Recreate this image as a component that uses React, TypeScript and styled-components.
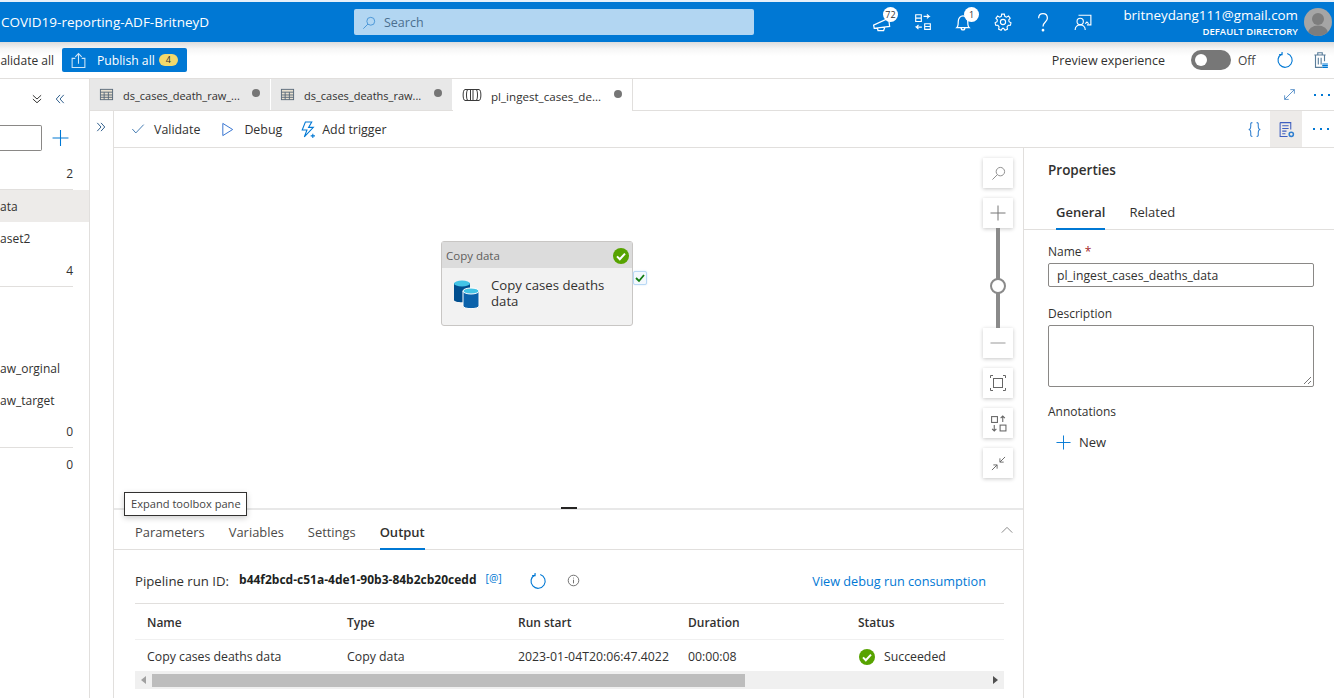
import styled, { createGlobalStyle } from 'styled-components'

const GlobalStyle = createGlobalStyle`
  html, body {
    margin: 0;
    padding: 0;
    background: #fff;
  }
  body {
    font-family: "Open Sans", "Liberation Sans", sans-serif;
    font-size: 12px;
    color: #323130;
  }
  * { box-sizing: border-box; }
`

const Page = styled.div`
  width: 1334px;
  height: 698px;
  overflow: hidden;
  position: relative;
  display: flex;
  flex-direction: column;
`

const TopBar = styled.header`
  height: 42px;
  flex: none;
  border-top: 2px solid #e6f0fa;
  background: #0078d4;
  color: #fff;
  display: flex;
  align-items: center;
`

const BrandTitle = styled.div`
  width: 354px;
  padding-left: 1px;
  font-size: 13.5px;
  white-space: nowrap;
  margin-top: -1px;
`

const SearchBox = styled.div`
  width: 400px;
  height: 26px;
  background: #b2d6f2;
  border-radius: 2px;
  display: flex;
  align-items: center;
  padding: 1px 0 0 8px;
  gap: 8px;
  color: #4b6f8f;
  font-size: 12.5px;
`

const TopIcons = styled.div`
  display: flex;
  align-items: center;
  margin-left: 109px;
  width: 240px;
`

const TopIconSlot = styled.div`
  width: 40px;
  height: 30px;
  display: flex;
  align-items: center;
  justify-content: center;
  position: relative;
`

const CountBadge = styled.span<{ $left: number }>`
  position: absolute;
  top: 0;
  left: ${p => p.$left}px;
  min-width: 15px;
  height: 15px;
  padding: 0 1px;
  border-radius: 8px;
  background: #fff;
  color: #333;
  font-size: 9px;
  line-height: 15px;
  text-align: center;
`

const Account = styled.div`
  flex: 1;
  display: flex;
  flex-direction: column;
  align-items: flex-end;
  margin-top: 2px;
  white-space: nowrap;
`

const AccountMail = styled.div`
  font-size: 13.4px;
  line-height: 17px;
`

const AccountDir = styled.div`
  font-size: 9.5px;
  font-weight: 600;
  line-height: 15px;
`

const Avatar = styled.div`
  width: 28px;
  height: 28px;
  margin: 0 2px 0 6px;
  border-radius: 50%;
  background: #a5a5a5;
  overflow: hidden;
`

const ActionBar = styled.div`
  height: 37px;
  flex: none;
  display: flex;
  align-items: center;
  border-bottom: 1px solid #e1dfdd;
  background: linear-gradient(#dcdcdc 0, #f6f6f6 7px, #fff 14px);
`

const EdgeLabel = styled.div`
  width: 54px;
  margin-right: 8px;
  display: flex;
  justify-content: flex-end;
  white-space: nowrap;
  font-size: 12px;
`

const PublishButton = styled.div`
  width: 125px;
  height: 24px;
  background: #0078d4;
  color: #fff;
  border-radius: 2px;
  display: flex;
  align-items: center;
  padding-left: 8px;
  font-size: 12.2px;
  gap: 10px;
`

const PublishBadge = styled.span`
  width: 19px;
  height: 12px;
  margin-left: -6px;
  border-radius: 6px;
  background: #f2d96c;
  color: #323130;
  font-size: 9px;
  line-height: 12px;
  text-align: center;
`

const ActionRight = styled.div`
  margin-left: auto;
  display: flex;
  align-items: center;
  padding-right: 5px;
`

const PreviewLabel = styled.span`
  margin-right: 26px;
  font-size: 12.5px;
`

const Toggle = styled.div`
  width: 40px;
  height: 20px;
  border-radius: 10px;
  background: #777;
  padding: 4px;
  margin-right: 7px;
`

const ToggleKnob = styled.div`
  width: 12px;
  height: 12px;
  border-radius: 50%;
  background: #fff;
`

const OffLabel = styled.span`
  width: 19px;
  margin-right: 19px;
  font-size: 12px;
  color: #444;
`

const ActionGap = styled.span`
  width: 17px;
`

const Main = styled.div`
  flex: 1;
  min-height: 0;
  display: flex;
`

const LeftPanel = styled.aside`
  width: 90px;
  flex: none;
  border-right: 1px solid #e1dfdd;
  display: flex;
  flex-direction: column;
  font-size: 12px;
`

const LeftHeader = styled.div`
  height: 44px;
  display: flex;
  justify-content: flex-end;
  align-items: flex-start;
  gap: 11px;
  padding: 14px 23px 0 0;
`

const FilterRow = styled.div`
  height: 28px;
  display: flex;
  align-items: center;
  margin-bottom: 6px;
`

const FilterInput = styled.div`
  width: 42px;
  height: 26px;
  margin-top: 2px;
  border: 1px solid #8a8886;
  border-left: 0;
  border-radius: 0 2px 2px 0;
  margin-right: 10px;
`

const CountRow = styled.div<{ $line?: boolean; $h: number }>`
  height: ${p => p.$h}px;
  width: 73px;
  display: flex;
  align-items: center;
  justify-content: flex-end;
  border-bottom: ${p => (p.$line ? '1px solid #e1dfdd' : '0')};
`

const TreeRow = styled.div<{ $selected?: boolean; $gap?: number }>`
  height: 32px;
  line-height: 34px;
  margin-top: ${p => p.$gap || 0}px;
  background: ${p => (p.$selected ? '#edebe9' : 'transparent')};
  white-space: nowrap;
`

const Workspace = styled.div`
  flex: 1;
  min-width: 0;
  display: flex;
  flex-direction: column;
`

const TabStrip = styled.div`
  height: 32px;
  flex: none;
  display: flex;
  border-bottom: 1px solid #e1dfdd;
  padding-right: 4px;
`

const DocTab = styled.div<{ $active?: boolean; $w: number }>`
  width: ${p => p.$w}px;
  height: ${p => (p.$active ? 32 : 31)}px;
  background: ${p => (p.$active ? '#fff' : '#e8e8e8')};
  border-right: ${p => (p.$active ? '1px solid #e1dfdd' : '1px solid #fff')};
  display: flex;
  align-items: center;
  padding: 0 10px 0 9px;
  font-size: ${p => (p.$active ? 11.6 : 11)}px;
  white-space: nowrap;
`

const TabName = styled.span`
  flex: 1;
  margin: 2px 0 0 9px;
`

const DirtyDot = styled.span`
  width: 8px;
  height: 8px;
  border-radius: 50%;
  background: #767676;
  margin-top: -3px;
`

const TabTools = styled.div`
  margin-left: auto;
  display: flex;
  align-items: center;
  gap: 18px;
`

const Dots = styled.span`
  display: flex;
  gap: 5px;
`

const Dot = styled.i`
  width: 2px;
  height: 2px;
  background: #0078d4;
`

const WorkBody = styled.div`
  flex: 1;
  min-height: 0;
  display: flex;
`

const ToolboxStrip = styled.div`
  width: 24px;
  flex: none;
  border-right: 1px solid #e1dfdd;
  padding: 9px 0 0 5px;
`

const Editor = styled.div`
  flex: 1;
  min-width: 0;
  display: flex;
  flex-direction: column;
`

const CommandBar = styled.div`
  height: 37px;
  flex: none;
  display: flex;
  align-items: center;
  border-bottom: 1px solid #e1dfdd;
  padding-left: 17px;
`

const Command = styled.div<{ $gap: number; $mr: number }>`
  display: flex;
  align-items: center;
  gap: ${p => p.$gap}px;
  margin-right: ${p => p.$mr}px;
  font-size: 12.4px;
`

const CommandRight = styled.div`
  margin-left: auto;
  display: flex;
  align-items: center;
  height: 100%;
`

const CommandIcon = styled.div<{ $active?: boolean; $shift?: number }>`
  width: 32px;
  height: 36px;
  display: flex;
  align-items: center;
  justify-content: center;
  padding-left: ${p => p.$shift || 0}px;
  background: ${p => (p.$active ? '#edebe9' : 'transparent')};
`

const Split = styled.div`
  flex: 1;
  min-height: 0;
  display: flex;
`

const CenterColumn = styled.div`
  flex: 1;
  min-width: 0;
  display: flex;
  flex-direction: column;
  border-right: 1px solid #e1dfdd;
`

const Canvas = styled.div`
  height: 360px;
  flex: none;
  position: relative;
`

const Activity = styled.div`
  position: absolute;
  left: 327px;
  top: 93px;
  width: 192px;
  height: 85px;
  background: #f2f2f2;
  border: 1px solid #c8c6c4;
  border-radius: 3px;
`

const ActivityHead = styled.div`
  height: 26px;
  background: #dcdcdc;
  display: flex;
  align-items: center;
  justify-content: space-between;
  padding: 1px 3px 0 4px;
  font-size: 11.5px;
  color: #605e5c;
`

const ActivityBody = styled.div`
  display: flex;
  padding: 9px 0 0 12px;
  gap: 11px;
  font-size: 13.2px;
  line-height: 16px;
`

const ActivityName = styled.div`
  width: 130px;
`

const ActivityPort = styled.div`
  position: absolute;
  left: 191px;
  top: 29px;
  width: 14px;
  height: 14px;
  background: #f3f8fd;
  border: 1px solid #b8d8f5;
  border-radius: 2px;
  box-shadow: 0 0 2px #cfe4f7;
  display: flex;
  align-items: center;
  justify-content: center;
`

const ZoomRail = styled.div`
  position: absolute;
  top: 10px;
  right: 10px;
  width: 30px;
  display: flex;
  flex-direction: column;
  align-items: center;
`

const ZoomButton = styled.div<{ $mb?: number }>`
  width: 30px;
  height: 30px;
  margin-bottom: ${p => p.$mb ?? 10}px;
  background: #fff;
  box-shadow: 0 1px 4px rgba(0, 0, 0, 0.22);
  display: flex;
  align-items: center;
  justify-content: center;
`

const ZoomTrack = styled.div`
  width: 4px;
  height: 100px;
  background: #8a8a8a;
  position: relative;
`

const ZoomKnob = styled.div`
  position: absolute;
  left: -6px;
  top: 50px;
  width: 16px;
  height: 16px;
  border-radius: 50%;
  background: #fff;
  border: 2px solid #8a8a8a;
`

const Splitter = styled.div`
  height: 2px;
  flex: none;
  background: #e8e8e8;
  position: relative;
`

const SplitterGrip = styled.div`
  position: absolute;
  left: 447px;
  top: -1px;
  width: 16px;
  height: 2px;
  background: #252423;
`

const Tooltip = styled.div`
  position: absolute;
  left: 124px;
  top: 492px;
  height: 24px;
  padding: 0 5px 0 6px;
  background: #fff;
  border: 1px solid #323130;
  box-shadow: 0 2px 6px rgba(0, 0, 0, 0.2);
  font-size: 11.1px;
  line-height: 22px;
  color: #444;
  white-space: nowrap;
`

const BottomPanel = styled.div`
  flex: 1;
  min-height: 0;
  padding-bottom: 9px;
`

const BottomTabs = styled.div`
  height: 40px;
  display: flex;
  align-items: stretch;
  gap: 24px;
  padding: 0 10px 0 21px;
  border-bottom: 1px solid #e1dfdd;
`

const PanelTab = styled.div<{ $active?: boolean }>`
  display: flex;
  align-items: center;
  padding-top: 6px;
  font-size: ${p => (p.$active ? 13 : 12.9)}px;
  margin-bottom: -1px;
  color: ${p => (p.$active ? '#323130' : '#4c4a48')};
  font-weight: ${p => (p.$active ? 600 : 400)};
  border-bottom: 2px solid ${p => (p.$active ? '#0078d4' : 'transparent')};
`

const Collapse = styled.div`
  margin: 4px 0 0 auto;
  align-self: center;
`

const RunRow = styled.div`
  height: 54px;
  margin: 0 19px 0 21px;
  display: flex;
  align-items: center;
  border-bottom: 1px solid #e1dfdd;
  padding-top: 8px;
  font-size: 13.2px;
`

const RunId = styled.span`
  margin: -2px 0 0 10px;
  font-size: 12px;
  font-weight: 700;
  color: #201f1e;
`

const RunTools = styled.div`
  display: flex;
  align-items: center;
  margin-left: 9px;
  gap: 20px;
`

const AtMark = styled.span`
  font-size: 10.5px;
  color: #0078d4;
  margin-top: -5px;
  margin-right: 7px;
`

const ConsumptionLink = styled.span`
  margin-left: auto;
  margin-right: 18px;
  color: #0078d4;
  font-size: 12.7px;
`

const TableRow = styled.div<{ $head?: boolean; $h: number }>`
  margin: 0 19px 0 21px;
  height: ${p => p.$h}px;
  padding: 2px 0 0 12px;
  display: grid;
  grid-template-columns: 200px 171px 170px 170px 1fr;
  align-items: center;
  font-size: ${p => (p.$head ? 12 : 12.3)}px;
  font-weight: ${p => (p.$head ? 600 : 400)};
  border-bottom: ${p => (p.$head ? '1px solid #f0f0f0' : '0')};
`

const StatusCell = styled.div`
  display: flex;
  align-items: center;
  gap: 9px;
  padding-left: 1px;
`

const ScrollBar = styled.div`
  margin: 0 19px 0 21px;
  height: 18px;
  background: #f0f0f0;
  display: flex;
  align-items: center;
  justify-content: space-between;
  padding: 0 6px;
  position: relative;
`

const ScrollThumb = styled.div`
  position: absolute;
  left: 17px;
  top: 3px;
  width: 593px;
  height: 13px;
  background: #bdbdbd;
`

const ScrollArrow = styled.span<{ $right?: boolean }>`
  width: 0;
  height: 0;
  border-top: 4px solid transparent;
  border-bottom: 4px solid transparent;
  border-left: ${p => (p.$right ? '5px solid #505050' : '0')};
  border-right: ${p => (p.$right ? '0' : '5px solid #a0a0a0')};
`

const Properties = styled.aside`
  width: 310px;
  flex: none;
  font-size: 12px;
`

const PropTitle = styled.div`
  padding: 13px 0 0 24px;
  height: 46px;
  font-size: 13.5px;
  font-weight: 600;
`

const PropTabs = styled.div`
  height: 36px;
  display: flex;
  gap: 24px;
  padding-left: 32px;
  border-bottom: 1px solid #e1dfdd;
`

const PropTab = styled.div<{ $active?: boolean }>`
  display: flex;
  align-items: center;
  padding-top: 2px;
  font-size: 13px;
  margin-bottom: -1px;
  font-weight: ${p => (p.$active ? 600 : 400)};
  border-bottom: 2px solid ${p => (p.$active ? '#0078d4' : 'transparent')};
`

const Form = styled.div`
  padding: 13px 20px 0 24px;
`

const FieldLabel = styled.div<{ $mt?: number }>`
  margin-top: ${p => p.$mt || 0}px;
  margin-bottom: 2px;
  height: 18px;
  line-height: 18px;
  font-size: 12px;
  font-weight: 500;
`

const Required = styled.span`
  color: #a4262c;
  font-weight: 400;
`

const NameInput = styled.div`
  height: 24px;
  border: 1px solid #8a8886;
  border-radius: 2px;
  line-height: 23px;
  padding-left: 8px;
  font-size: 12.2px;
`

const DescriptionBox = styled.div`
  height: 62px;
  border: 1px solid #8a8886;
  border-radius: 2px;
  position: relative;
`

const Resizer = styled.svg`
  position: absolute;
  right: 1px;
  bottom: 1px;
`

const AddNew = styled.div`
  display: flex;
  align-items: center;
  gap: 8px;
  margin: 12px 0 0 8px;
  font-size: 13px;
`

const Stroke = { fill: 'none', stroke: 'currentColor', strokeWidth: 1 }

function Glyph({ size = 16, color = '#0078d4', children }: { size?: number; color?: string; children: React.ReactNode }) {
  return (
    <svg width={size} height={size} viewBox="0 0 16 16" style={{ color, flex: 'none' }} {...Stroke}>
      {children}
    </svg>
  )
}

function GreenCheck({ size = 16 }: { size?: number }) {
  return (
    <svg width={size} height={size} viewBox="0 0 16 16" style={{ flex: 'none' }}>
      <circle cx="8" cy="8" r="8" fill="#57a300" />
      <path d="M4 8.4l2.8 2.8L12 5.6" fill="none" stroke="#fff" strokeWidth="2" />
    </svg>
  )
}

function TableIcon() {
  return (
    <Glyph size={15} color="#5a6a7a">
      <rect x="1.5" y="2.5" width="13" height="11" fill="#e8e0d0" />
      <path d="M1.5 5.5h13M1.5 8.5h13M1.5 11h13M5.5 5.5v8M10 5.5v8" />
    </Glyph>
  )
}

function Refresh({ size = 18 }: { size?: number }) {
  return (
    <Glyph size={size}>
      <path d="M5.2 2.6A6.3 6.3 0 1 0 10 2.2" />
      <path d="M5.4 0.8v2.4H2.8" />
    </Glyph>
  )
}

function DoubleChevron({ dir, color = '#323130' }: { dir: 'left' | 'right' | 'down'; color?: string }) {
  const rot = dir === 'left' ? 180 : dir === 'down' ? 90 : 0
  return (
    <Glyph size={12} color={color}>
      <g transform={`rotate(${rot} 8 8)`}>
        <path d="M3 2.5L8 8l-5 5.5M8 2.5L13 8l-5 5.5" strokeWidth="1.3" />
      </g>
    </Glyph>
  )
}

function Ellipsis() {
  return (
    <Dots>
      <Dot />
      <Dot />
      <Dot />
    </Dots>
  )
}

export default function App() {
  return (
    <Page>
      <GlobalStyle />
      <TopBar>
        <BrandTitle>COVID19-reporting-ADF-BritneyD</BrandTitle>
        <SearchBox>
          <Glyph size={14} color="#3f8fd4">
            <circle cx="10" cy="6" r="4.5" />
            <path d="M6.8 9.2L1.5 14.5" />
          </Glyph>
          Search
        </SearchBox>
        <TopIcons>
          <TopIconSlot>
            <Glyph size={20} color="#fff">
              <path d="M.5 10.5l12-5.500.8 6.500L1 13zM3.500 12.800l.5 2h4.500l1-2.800" />
            </Glyph>
            <CountBadge $left={20}>72</CountBadge>
          </TopIconSlot>
          <TopIconSlot>
            <Glyph size={18} color="#fff">
              <path d="M1.500 1.500h5v6h-5zM1.500 4.500h5M9.500 9.500h5v5h-5zM9.500 12h5M8.500 3h5l-2-1.800M13.500 3l-2 1.800M7 12.500H2l2 1.800M2 12.500l2-1.800" />
            </Glyph>
          </TopIconSlot>
          <TopIconSlot>
            <Glyph size={20} color="#fff">
              <path d="M3 12.500c1.200-1.200 1.200-2.500 1.200-5C4.200 4.800 6 3 8 3s3.800 1.800 3.800 4.500c0 2.500 0 3.800 1.200 5zM6.500 12.500c0 2.400 3 2.400 3 0" />
            </Glyph>
            <CountBadge $left={21}>1</CountBadge>
          </TopIconSlot>
          <TopIconSlot>
            <Glyph size={18} color="#fff">
              <circle cx="8" cy="8" r="2.300" />
              <path d="M6.800 1h2.400l.4 2 1.500.700 1.800-1 1.500 1.900-1.300 1.500.3 1.600 1.700.900-.5 2.300-2 .1-1 1.300.4 2-2.200 1-1.200-1.600H7.500l-1.200 1.600-2.200-1 .4-2-1-1.300-2-.1-.5-2.300 1.700-.9.300-1.600L1.700 4.600l1.500-1.900 1.800 1 1.500-.7z" />
            </Glyph>
          </TopIconSlot>
          <TopIconSlot>
            <Glyph size={20} color="#fff">
              <path d="M4.500 5c0-5 7-5 7 0 0 3-3.500 3-3.500 6.500" />
              <circle cx="8" cy="14.500" r=".6" fill="#fff" />
            </Glyph>
          </TopIconSlot>
          <TopIconSlot>
            <Glyph size={18} color="#fff">
              <circle cx="5.500" cy="7.500" r="2.800" />
              <path d="M1 15c0-6 9-6 9 0M4 2h11v8.500h-3.500M10 9.500l1.500-1.500 1.500 1.500" />
            </Glyph>
          </TopIconSlot>
        </TopIcons>
        <Account>
          <AccountMail>britneydang111@gmail.com</AccountMail>
          <AccountDir>DEFAULT DIRECTORY</AccountDir>
        </Account>
        <Avatar>
          <svg width="28" height="28" viewBox="0 0 28 28">
            <circle cx="14" cy="11" r="6" fill="#7d7d7d" />
            <ellipse cx="14" cy="25" rx="10" ry="7.500" fill="#7d7d7d" />
          </svg>
        </Avatar>
      </TopBar>

      <ActionBar>
        <EdgeLabel>alidate all</EdgeLabel>
        <PublishButton>
          <Glyph size={17} color="#cfe6f8">
            <path d="M5 6H2v8.500h12V6h-3M8 11V1.500M5 4.500l3-3 3 3" />
          </Glyph>
          Publish all
          <PublishBadge>4</PublishBadge>
        </PublishButton>
        <ActionRight>
          <PreviewLabel>Preview experience</PreviewLabel>
          <Toggle>
            <ToggleKnob />
          </Toggle>
          <OffLabel>Off</OffLabel>
          <Refresh />
          <ActionGap />
          <Glyph size={18} color="#5a7d9a">
            <path d="M3 3.500h10M6 3.500V1.500h4v2M4 3.500v11h6M12 3.500V9M6.500 6v6M9 6v6" />
            <path d="M10 11.500h5M10 13h5M10 14.500h5" stroke="#0078d4" />
          </Glyph>
        </ActionRight>
      </ActionBar>

      <Main>
        <LeftPanel>
          <LeftHeader>
            <DoubleChevron dir="down" />
            <DoubleChevron dir="left" color="#2b5c8a" />
          </LeftHeader>
          <FilterRow>
            <FilterInput />
            <Glyph size={17}>
              <path d="M8 1v15M.5 8.500h15" />
            </Glyph>
          </FilterRow>
          <CountRow $h={33} $line>
            2
          </CountRow>
          <TreeRow $selected>ata</TreeRow>
          <TreeRow>aset2</TreeRow>
          <CountRow $h={33} $line>
            4
          </CountRow>
          <TreeRow $gap={65}>aw_orginal</TreeRow>
          <TreeRow>aw_target</TreeRow>
          <CountRow $h={32} $line>
            0
          </CountRow>
          <CountRow $h={33}>0</CountRow>
        </LeftPanel>

        <Workspace>
          <TabStrip>
            <DocTab $w={181}>
              <TableIcon />
              <TabName>ds_cases_death_raw_...</TabName>
              <DirtyDot />
            </DocTab>
            <DocTab $w={182}>
              <TableIcon />
              <TabName>ds_cases_deaths_raw...</TabName>
              <DirtyDot />
            </DocTab>
            <DocTab $active $w={180}>
              <svg width="20" height="14" viewBox="0 0 20 14" style={{ flex: 'none' }}>
                <path
                  d="M3 1.500h14c2.500 0 2.500 11 0 11H3c-2.500 0-2.500-11 0-11zM6 1.500c-2 0-2 11 0 11M14 1.500c2 0 2 11 0 11M8.500 1.500v11M11 1.500v11"
                  fill="none"
                  stroke="#3a3a3a"
                />
              </svg>
              <TabName>pl_ingest_cases_de...</TabName>
              <DirtyDot />
            </DocTab>
            <TabTools>
              <Glyph size={13} color="#3f7fc0">
                <path d="M2 14L14 2M9 2h5v5M2 9v5h5" />
              </Glyph>
              <Ellipsis />
            </TabTools>
          </TabStrip>

          <WorkBody>
            <ToolboxStrip>
              <DoubleChevron dir="right" color="#2b5c8a" />
            </ToolboxStrip>
            <Editor>
              <CommandBar>
                <Command $gap={9} $mr={20}>
                  <Glyph size={14} color="#2b6aa8">
                    <path d="M1.500 8l4 4.500L14.500 3" />
                  </Glyph>
                  Validate
                </Command>
                <Command $gap={9} $mr={17}>
                  <Glyph size={15} color="#2f6fcf">
                    <path d="M3 1.500L13.500 8 3 14.500z" />
                  </Glyph>
                  Debug
                </Command>
                <Command $gap={6} $mr={0}>
                  <Glyph size={17}>
                    <path d="M6 1h6L9 6h4.500L5 15l2.500-6.500H3z" />
                    <path d="M13 12v4M11 14h4" />
                  </Glyph>
                  Add trigger
                </Command>
                <CommandRight>
                  <CommandIcon>
                    <Glyph size={17} color="#2f7fd0">
                      <path d="M6 1.500c-2 0-1.500 1.500-1.500 3s-.5 3.500-2 3.500c1.500 0 2 2 2 3.500s-.5 3 1.500 3M10 1.500c2 0 1.500 1.500 1.500 3s.5 3.500 2 3.500c-1.500 0-2 2-2 3.500s.5 3-1.500 3" />
                    </Glyph>
                  </CommandIcon>
                  <CommandIcon $active>
                    <Glyph size={17} color="#3f5fc0">
                      <path d="M2 1.500h10V8M2 1.500v13h7M4 4.500h6M4 7h6M4 9.500h4M4 12h3" />
                      <circle cx="12.500" cy="12.500" r="2" stroke="#2f7fd0" strokeWidth="1.400" />
                    </Glyph>
                  </CommandIcon>
                  <CommandIcon $shift={5}>
                    <Ellipsis />
                  </CommandIcon>
                </CommandRight>
              </CommandBar>

              <Split>
                <CenterColumn>
                  <Canvas>
                    <Activity>
                      <ActivityHead>
                        Copy data
                        <GreenCheck />
                      </ActivityHead>
                      <ActivityBody>
                        <svg width="26" height="29" viewBox="0 0 26 29" style={{ flex: 'none', marginTop: 3 }}>
                          <path d="M0 3v17c0 3 16 3 16 0V3z" fill="#004f8f" />
                          <ellipse cx="8" cy="3.500" rx="8" ry="3" fill="#43c4e6" />
                          <path d="M9 11v15c0 3.500 16 3.500 16 0V11z" fill="#0a62ab" stroke="#fff" />
                          <ellipse cx="17" cy="11" rx="8" ry="3" fill="#43c4e6" stroke="#fff" />
                        </svg>
                        <ActivityName>Copy cases deaths data</ActivityName>
                      </ActivityBody>
                      <ActivityPort>
                        <svg width="10" height="10" viewBox="0 0 10 10">
                          <path d="M1 5l3 3 5-6" fill="none" stroke="#107c10" strokeWidth="1.800" />
                        </svg>
                      </ActivityPort>
                    </Activity>

                    <ZoomRail>
                      <ZoomButton>
                        <Glyph size={15} color="#8a8a8a">
                          <circle cx="10" cy="6" r="4.500" />
                          <path d="M6.800 9.200L1.500 14.500" />
                        </Glyph>
                      </ZoomButton>
                      <ZoomButton $mb={0}>
                        <Glyph size={16} color="#777">
                          <path d="M8 .5v15M.5 8h15" />
                        </Glyph>
                      </ZoomButton>
                      <ZoomTrack>
                        <ZoomKnob />
                      </ZoomTrack>
                      <ZoomButton>
                        <Glyph size={16} color="#999">
                          <path d="M.5 8h15" />
                        </Glyph>
                      </ZoomButton>
                      <ZoomButton>
                        <Glyph size={16} color="#666">
                          <rect x="3.500" y="3.500" width="9" height="9" />
                          <path d="M.5 3V.5H3M13 .5h2.500V3M15.500 13v2.500H13M3 15.500H.5V13" />
                        </Glyph>
                      </ZoomButton>
                      <ZoomButton>
                        <Glyph size={17} color="#666">
                          <rect x="1.500" y="1.500" width="5.500" height="5.500" />
                          <rect x="9.500" y="9.500" width="5.500" height="5.500" />
                          <path d="M12 6.500V1M10 3l2-2 2 2M4 9.500V15M2 13l2 2 2-2" />
                        </Glyph>
                      </ZoomButton>
                      <ZoomButton $mb={0}>
                        <Glyph size={15} color="#666">
                          <path d="M9.500 6.500L15 1M9.500 2.500v4h4M6.500 9.500L1 15M2.500 9.500h4v4" />
                        </Glyph>
                      </ZoomButton>
                    </ZoomRail>
                  </Canvas>

                  <Splitter>
                    <SplitterGrip />
                  </Splitter>

                  <BottomPanel>
                    <BottomTabs>
                      <PanelTab>Parameters</PanelTab>
                      <PanelTab>Variables</PanelTab>
                      <PanelTab>Settings</PanelTab>
                      <PanelTab $active>Output</PanelTab>
                      <Collapse>
                        <Glyph size={12} color="#666">
                          <path d="M1 11.500L8 4.500l7 7" />
                        </Glyph>
                      </Collapse>
                    </BottomTabs>
                    <RunRow>
                      Pipeline run ID:
                      <RunId>b44f2bcd-c51a-4de1-90b3-84b2cb20cedd</RunId>
                      <RunTools>
                        <AtMark>[@]</AtMark>
                        <Refresh />
                        <Glyph size={13} color="#555">
                          <circle cx="8" cy="8" r="6.500" />
                          <path d="M8 7v4.500M8 4.500v1" />
                        </Glyph>
                      </RunTools>
                      <ConsumptionLink>View debug run consumption</ConsumptionLink>
                    </RunRow>
                    <TableRow $head $h={36}>
                      <span>Name</span>
                      <span>Type</span>
                      <span>Run start</span>
                      <span>Duration</span>
                      <span>Status</span>
                    </TableRow>
                    <TableRow $h={31}>
                      <span>Copy cases deaths data</span>
                      <span>Copy data</span>
                      <span>2023-01-04T20:06:47.4022</span>
                      <span>00:00:08</span>
                      <StatusCell>
                        <GreenCheck />
                        Succeeded
                      </StatusCell>
                    </TableRow>
                    <ScrollBar>
                      <ScrollArrow />
                      <ScrollThumb />
                      <ScrollArrow $right />
                    </ScrollBar>
                  </BottomPanel>
                </CenterColumn>

                <Properties>
                  <PropTitle>Properties</PropTitle>
                  <PropTabs>
                    <PropTab $active>General</PropTab>
                    <PropTab>Related</PropTab>
                  </PropTabs>
                  <Form>
                    <FieldLabel>
                      Name <Required>*</Required>
                    </FieldLabel>
                    <NameInput>pl_ingest_cases_deaths_data</NameInput>
                    <FieldLabel $mt={18}>Description</FieldLabel>
                    <DescriptionBox>
                      <Resizer width="9" height="9" viewBox="0 0 9 9">
                        <path d="M8 1L1 8M8 5L5 8" stroke="#777" fill="none" />
                      </Resizer>
                    </DescriptionBox>
                    <FieldLabel $mt={16}>Annotations</FieldLabel>
                    <AddNew>
                      <Glyph size={15}>
                        <path d="M8 .5v15M.5 8h15" />
                      </Glyph>
                      New
                    </AddNew>
                  </Form>
                </Properties>
              </Split>
            </Editor>
          </WorkBody>
        </Workspace>
      </Main>

      <Tooltip>Expand toolbox pane</Tooltip>
    </Page>
  )
}
